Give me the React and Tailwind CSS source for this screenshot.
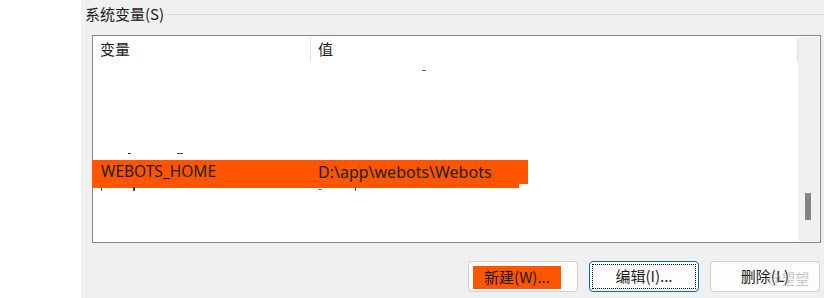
import React from "react";

const cjk = { fontFamily: '"Noto Sans CJK SC", "Noto Sans", sans-serif' };

function Button({ children, highlight, focused }) {
  return (
    <button
      className={
        focused
          ? "w-[110px] h-[31px] rounded-[4px] border border-[#0067c0] bg-[#fdfdfd] p-[2px]"
          : "w-[110px] h-[31px] rounded-[4px] border border-[#d0d0d0] bg-[#fdfdfd] p-[4px]"
      }
    >
      {focused ? (
        <span className="flex h-full w-full items-center justify-center border border-dotted border-black text-[15px] text-[#1b1b1b]">
          {children}
        </span>
      ) : highlight ? (
        <span className="flex h-[23px] w-[88px] items-center justify-center bg-[#ff5500] text-[15px] text-[#1a1a00]">
          {children}
        </span>
      ) : (
        <span className="flex h-full w-full items-center justify-center text-[15px] text-[#1b1b1b]">
          {children}
        </span>
      )}
    </button>
  );
}

export default function App() {
  return (
    <div className="flex h-[298px] w-[824px] overflow-hidden bg-white" style={cjk}>
      <div className="w-[81px] shrink-0 bg-white" />
      <div className="flex flex-1 flex-col bg-[#f0f0f0] pl-[4px]">
        {/* group header */}
        <div className="flex h-[26px] items-center">
          <span className="text-[15px] leading-none text-[#1b1b1b]">系统变量(S)</span>
          <div className="ml-[3px] mt-[2px] h-px flex-1 bg-[#dcdcdc]" />
        </div>

        {/* list box */}
        <div className="ml-[7px] mt-[9px] mr-[3px] flex h-[208px] border border-[#828790] bg-white">
          <div className="relative flex flex-1 flex-col pt-[1px]">
            <div className="flex h-[25px] text-[15px] text-[#1b1b1b]">
              <div className="flex w-[218px] items-center border-r border-[#e5e5e5] pl-[7px]">变量</div>
              <div className="flex flex-1 items-center border-r border-[#e5e5e5] pl-[7px]">值</div>
            </div>

            {/* leftover marks */}
            <span className="absolute left-[329px] top-[34px] h-px w-[4px] bg-[#5a6c8a]" />
            <span className="absolute left-[35px] top-[117px] h-px w-[3px] bg-[#334]" />
            <span className="absolute left-[84px] top-[117px] h-px w-[6px] bg-[#445]" />
            <span className="absolute left-[8px] top-[152px] h-[3px] w-px bg-[#556]" />
            <span className="absolute left-[40px] top-[151px] h-[4px] w-[2px] bg-[#445]" />
            <span className="absolute left-[225px] top-[153px] h-px w-[4px] bg-[#778]" />
            <span className="absolute left-[262px] top-[151px] h-[4px] w-px bg-[#556]" />

            {/* highlighted row */}
            <div className="mt-[98px] -ml-[1px] flex h-[24px] w-[436px] items-center bg-[#ff5500] text-[16px] text-[#1a1f00]" style={{ fontFamily: '"Noto Sans", sans-serif' }}>
              <span className="w-[226px] pl-[9px] text-[15.5px]">WEBOTS_HOME</span>
              <span>D:\app\webots\Webots</span>
            </div>
            <div className="-ml-[1px] h-[4px] w-[427px] bg-[#ff5500]" />
          </div>
          <div className="relative w-[21px] shrink-0 bg-[#f0f0f0] mt-[1px] mb-[1px] mr-[1px]">
            <div className="absolute left-[7px] top-[156px] h-[27px] w-[6px] bg-[#858585]" />
          </div>
        </div>

        {/* buttons */}
        <div className="mt-[18px] flex justify-end gap-[11px] pr-[4px]">
          <Button highlight>新建(W)...</Button>
          <Button focused>编辑(I)...</Button>
          <div className="relative">
            <Button>删除(L)</Button>
            <span className="absolute left-[58px] top-[7px] text-[14px] text-[#b0b0b0]/70">@望望</span>
          </div>
        </div>
      </div>
    </div>
  );
}
